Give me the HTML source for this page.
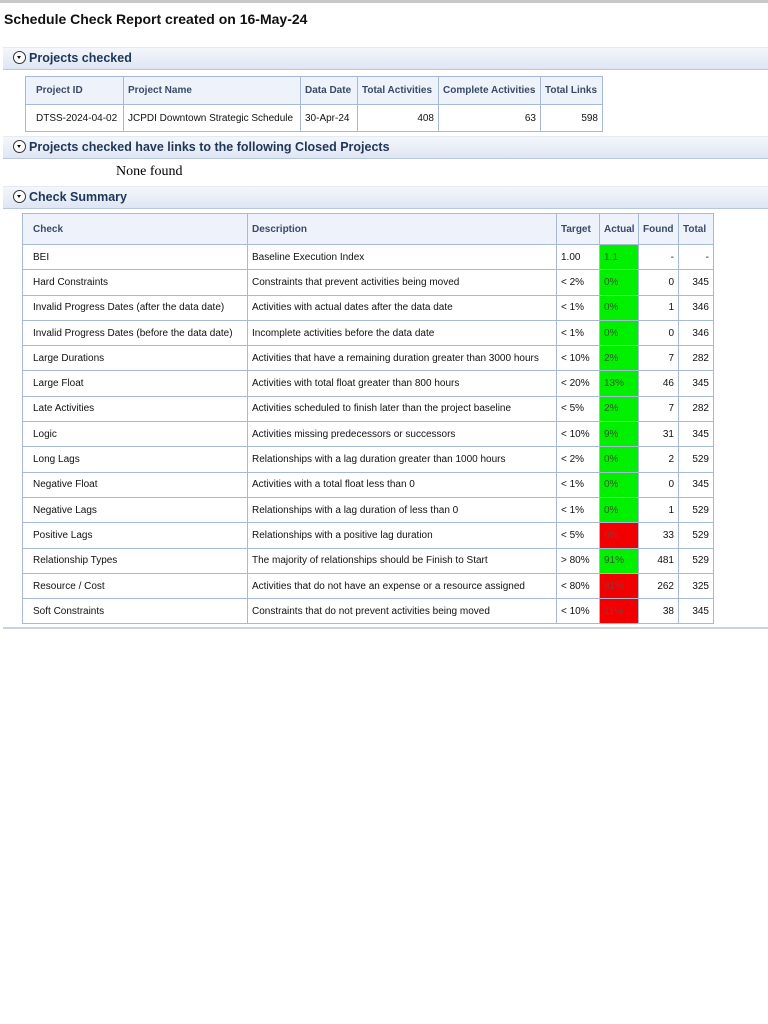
<!DOCTYPE html>
<html><head><style>
body{margin:0;width:768px;height:1024px;background:#fff;font-family:"Liberation Sans",sans-serif;position:relative;overflow:hidden}
.top{position:absolute;left:0;top:0;width:768px;height:3px;background:#c8c8c8}
h1{position:absolute;left:4px;top:11px;margin:0;font-size:14px;font-weight:bold;color:#111}
.sec{position:absolute;left:3px;width:765px;height:21px;background:linear-gradient(#f4f6fb,#dfe6f3);border-top:1px solid #e4e9f3;border-bottom:1px solid #b8c7de;font-size:12.5px;font-weight:bold;color:#1f3657;line-height:21px}
.sec i{display:inline-block;width:11px;height:11px;border:1px solid #333;border-radius:50%;background:#fff;vertical-align:-2px;margin:0 3px 0 10px;position:relative}
.sec i:after{content:"";position:absolute;left:3px;top:4px;border-left:2.5px solid transparent;border-right:2.5px solid transparent;border-top:3px solid #111}
table{position:absolute;border-collapse:collapse;table-layout:fixed;font-size:10px;color:#111}
td,th{border:1px solid #a6bad8;padding:0 4px;white-space:nowrap;overflow:hidden}
th{background:#eef2fa;color:#3a4a66;text-align:left;font-weight:bold}
.r{text-align:right}
.g{background:#00f000;color:#2f5a20}
.x{background:#f00000;color:#a03030}
.none{position:absolute;left:116px;top:164px;font-family:"Liberation Serif",serif;font-size:14px}
.bot{position:absolute;left:3px;top:627px;width:765px;height:2px;background:#c8d2e2}
</style></head><body>
<div class="top"></div>
<h1>Schedule Check Report created on 16-May-24</h1>
<div class="sec" style="top:47px"><i></i>Projects checked</div>
<table style="left:25px;top:76px;width:577px">
<col style="width:98px"><col style="width:177px"><col style="width:57px"><col style="width:81px"><col style="width:102px"><col style="width:62px">
<tr style="height:28px"><th style="padding-left:10px">Project ID</th><th>Project Name</th><th>Data Date</th><th>Total Activities</th><th>Complete Activities</th><th>Total Links</th></tr>
<tr style="height:27px"><td style="padding-left:10px">DTSS-2024-04-02</td><td>JCPDI Downtown Strategic Schedule</td><td>30-Apr-24</td><td class="r">408</td><td class="r">63</td><td class="r">598</td></tr>
</table>
<div class="sec" style="top:136px"><i></i>Projects checked have links to the following Closed Projects</div>
<div class="none">None found</div>
<div class="sec" style="top:186px"><i></i>Check Summary</div>
<table style="left:22px;top:213px;width:691px">
<col style="width:225px"><col style="width:309px"><col style="width:43px"><col style="width:39px"><col style="width:40px"><col style="width:35px">
<tr style="height:31px"><th style="padding-left:10px">Check</th><th>Description</th><th>Target</th><th>Actual</th><th>Found</th><th>Total</th></tr>
<tr style="height:25.3px"><td style="padding-left:10px">BEI</td><td>Baseline Execution Index</td><td>1.00</td><td class="g">1.1</td><td class="r">-</td><td class="r">-</td></tr>
<tr style="height:25.3px"><td style="padding-left:10px">Hard Constraints</td><td>Constraints that prevent activities being moved</td><td>&lt; 2%</td><td class="g">0%</td><td class="r">0</td><td class="r">345</td></tr>
<tr style="height:25.3px"><td style="padding-left:10px">Invalid Progress Dates (after the data date)</td><td>Activities with actual dates after the data date</td><td>&lt; 1%</td><td class="g">0%</td><td class="r">1</td><td class="r">346</td></tr>
<tr style="height:25.3px"><td style="padding-left:10px">Invalid Progress Dates (before the data date)</td><td>Incomplete activities before the data date</td><td>&lt; 1%</td><td class="g">0%</td><td class="r">0</td><td class="r">346</td></tr>
<tr style="height:25.3px"><td style="padding-left:10px">Large Durations</td><td>Activities that have a remaining duration greater than 3000 hours</td><td>&lt; 10%</td><td class="g">2%</td><td class="r">7</td><td class="r">282</td></tr>
<tr style="height:25.3px"><td style="padding-left:10px">Large Float</td><td>Activities with total float greater than 800 hours</td><td>&lt; 20%</td><td class="g">13%</td><td class="r">46</td><td class="r">345</td></tr>
<tr style="height:25.3px"><td style="padding-left:10px">Late Activities</td><td>Activities scheduled to finish later than the project baseline</td><td>&lt; 5%</td><td class="g">2%</td><td class="r">7</td><td class="r">282</td></tr>
<tr style="height:25.3px"><td style="padding-left:10px">Logic</td><td>Activities missing predecessors or successors</td><td>&lt; 10%</td><td class="g">9%</td><td class="r">31</td><td class="r">345</td></tr>
<tr style="height:25.3px"><td style="padding-left:10px">Long Lags</td><td>Relationships with a lag duration greater than 1000 hours</td><td>&lt; 2%</td><td class="g">0%</td><td class="r">2</td><td class="r">529</td></tr>
<tr style="height:25.3px"><td style="padding-left:10px">Negative Float</td><td>Activities with a total float less than 0</td><td>&lt; 1%</td><td class="g">0%</td><td class="r">0</td><td class="r">345</td></tr>
<tr style="height:25.3px"><td style="padding-left:10px">Negative Lags</td><td>Relationships with a lag duration of less than 0</td><td>&lt; 1%</td><td class="g">0%</td><td class="r">1</td><td class="r">529</td></tr>
<tr style="height:25.3px"><td style="padding-left:10px">Positive Lags</td><td>Relationships with a positive lag duration</td><td>&lt; 5%</td><td class="x">6%</td><td class="r">33</td><td class="r">529</td></tr>
<tr style="height:25.3px"><td style="padding-left:10px">Relationship Types</td><td>The majority of relationships should be Finish to Start</td><td>&gt; 80%</td><td class="g">91%</td><td class="r">481</td><td class="r">529</td></tr>
<tr style="height:25.3px"><td style="padding-left:10px">Resource / Cost</td><td>Activities that do not have an expense or a resource assigned</td><td>&lt; 80%</td><td class="x">81%</td><td class="r">262</td><td class="r">325</td></tr>
<tr style="height:25.3px"><td style="padding-left:10px">Soft Constraints</td><td>Constraints that do not prevent activities being moved</td><td>&lt; 10%</td><td class="x">11%</td><td class="r">38</td><td class="r">345</td></tr>
</table>
<div class="bot"></div>
</body></html>
